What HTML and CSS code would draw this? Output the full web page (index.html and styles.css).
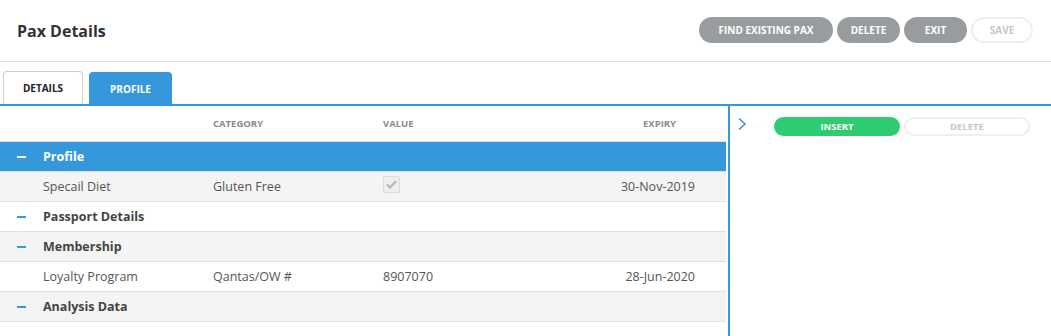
FILE: index.html
```html
<!DOCTYPE html>
<html lang="en">
<head>
    <meta charset="UTF-8">
    <title>Pax Details</title>
    <link rel="stylesheet" href="styles.css">
</head>
<body>

<header class="page-header">
    <h1 class="title">Pax Details</h1>
    <div class="actions">
        <button class="btn btn-grey btn-wide">FIND EXISTING PAX</button>
        <button class="btn btn-grey">DELETE</button>
        <button class="btn btn-grey">EXIT</button>
        <button class="btn btn-off">SAVE</button>
    </div>
</header>

<nav class="tabs">
    <div class="tab">DETAILS</div>
    <div class="tab active">PROFILE</div>
</nav>

<div class="main">
    <div class="grid-panel">
        <div class="row head">
            <div class="c-name"></div>
            <div class="c-cat">CATEGORY</div>
            <div class="c-val">VALUE</div>
            <div class="c-exp">EXPIRY</div>
        </div>

        <div class="row group selected">
            <div class="c-name"><span class="minus"></span>Profile</div>
        </div>
        <div class="row item shade">
            <div class="c-name">Specail Diet</div>
            <div class="c-cat">Gluten Free</div>
            <div class="c-val">
                <span class="check">
                    <svg width="11" height="9" viewBox="0 0 11 9">
                        <path d="M1 4.5 L4 7.5 L10 1.2" fill="none" stroke="#aebdbb" stroke-width="2.2"/>
                    </svg>
                </span>
            </div>
            <div class="c-exp">30-Nov-2019</div>
        </div>
        <div class="row group">
            <div class="c-name"><span class="minus"></span>Passport Details</div>
        </div>
        <div class="row group shade">
            <div class="c-name"><span class="minus"></span>Membership</div>
        </div>
        <div class="row item">
            <div class="c-name">Loyalty Program</div>
            <div class="c-cat">Qantas/OW #</div>
            <div class="c-val">8907070</div>
            <div class="c-exp">28-Jun-2020</div>
        </div>
        <div class="row group shade last">
            <div class="c-name"><span class="minus"></span>Analysis Data</div>
        </div>
    </div>

    <div class="side-panel">
        <svg class="chevron" width="10" height="14" viewBox="0 0 10 14">
            <path d="M2 1.5 L8 7 L2 12.5" fill="none" stroke="#3498db" stroke-width="1.6"/>
        </svg>
        <button class="pill pill-green">INSERT</button>
        <button class="pill pill-off">DELETE</button>
    </div>
</div>

</body>
</html>
```

FILE: styles.css
```css
body {
    font-family: "Open Sans", Arial, sans-serif;
    margin: 0;
    padding: 0;
    background-color: #ffffff;
    color: #555;
}

.page-header {
    height: 61px;
    border-bottom: 1px solid #dcdce4;
    display: flex;
    align-items: center;
    justify-content: space-between;
    padding: 0 19px 0 17px;
}

.title {
    margin: 0;
    font-size: 16px;
    font-weight: bold;
    color: #333;
}

.actions {
    display: flex;
    gap: 4px;
    margin-top: -2px;
    margin-right: -1px;
}

.btn {
    font-family: inherit;
    font-size: 10px;
    font-weight: bold;
    height: 26px;
    width: 63px;
    border-radius: 13px;
    padding: 0;
    border: 2px solid transparent;
    color: #fff;
}

.btn-grey {
    background: #999c9f;
}

.btn-wide {
    width: 134px;
}

.btn-off {
    background: #fff;
    border-color: #eef0f0;
    color: #c4c7ca;
    width: 62px;
}

.tabs {
    display: flex;
    gap: 6px;
    padding: 9px 0 0 3px;
    height: 33px;
    border-bottom: 2px solid #3498db;
}

.tab {
    width: 78px;
    border: 1px solid #cfcfcf;
    border-bottom: none;
    border-radius: 4px 4px 0 0;
    font-size: 10px;
    font-weight: bold;
    color: #222;
    display: flex;
    align-items: center;
    justify-content: center;
}

.tab.active {
    width: 81px;
    background: #3498db;
    border-color: #3498db;
    color: #fff;
    margin-top: 1px;
}

.main {
    display: flex;
    height: 231px;
}

.grid-panel {
    width: 726px;
    border-right: 2px solid transparent;
}

.side-panel {
    flex: 1;
    border-left: 2px solid #3498db;
    display: flex;
    align-items: flex-start;
    padding: 11px 0 0 7px;
}

.chevron {
    margin-right: 27px;
}

.pill {
    font-family: inherit;
    font-size: 9.5px;
    font-weight: bold;
    height: 19px;
    width: 126px;
    border-radius: 10px;
    border: 2px solid transparent;
    margin-right: 4px;
    padding: 0;
}

.pill-green {
    background: #2ecc71;
    color: #fff;
}

.pill-off {
    background: #fff;
    border-color: #eef0f0;
    color: #c4c7ca;
}

.row {
    display: flex;
    align-items: center;
    height: 29px;
    border-bottom: 1px solid #e0e0e0;
    font-size: 12.5px;
}

.row.head {
    height: 35px;
    font-size: 9.5px;
    font-weight: bold;
    color: #8a8a8a;
    border-bottom-color: #e3e3e3;
}

.row.shade {
    background: #f4f4f4;
}

.row.group {
    font-weight: bold;
    color: #444;
}

.row.selected {
    background: #3498db;
    color: #fff;
}

.row.last {
    border-bottom-right-radius: 3px;
}

.c-name {
    width: 213px;
    padding-left: 43px;
    box-sizing: border-box;
    position: relative;
}

.c-cat {
    width: 170px;
}

.c-val {
    width: 200px;
}

.c-exp {
    width: 112px;
    text-align: right;
}

.row.head .c-exp {
    width: 93px;
}

.minus {
    position: absolute;
    left: 17px;
    top: 50%;
    width: 9px;
    height: 2px;
    margin-top: -1px;
    background: #3498db;
}

.row.selected .minus {
    background: #fff;
}

.check {
    display: flex;
    align-items: center;
    justify-content: center;
    width: 15px;
    height: 15px;
    border: 1px solid #d9dcdc;
    border-radius: 2px;
    background: #eeeeee;
    margin-top: -4px;
}
```
